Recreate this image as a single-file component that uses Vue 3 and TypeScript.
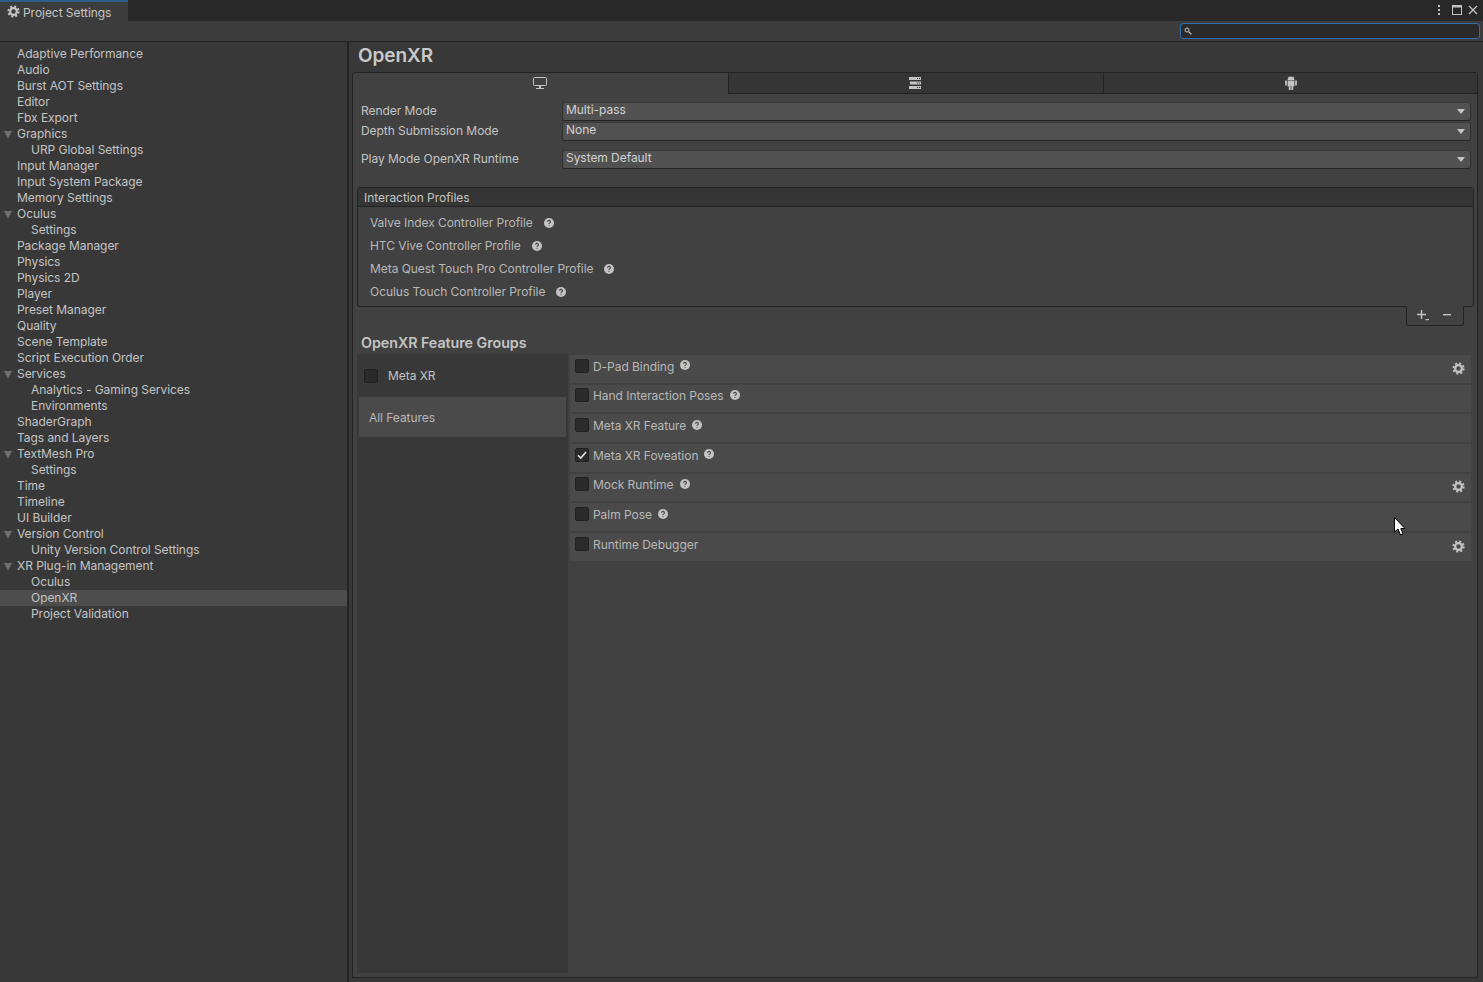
<script setup lang="ts">
interface NavItem { label: string; level: number; open?: boolean; selected?: boolean }
const nav: NavItem[] = [
  { label: 'Adaptive Performance', level: 0 },
  { label: 'Audio', level: 0 },
  { label: 'Burst AOT Settings', level: 0 },
  { label: 'Editor', level: 0 },
  { label: 'Fbx Export', level: 0 },
  { label: 'Graphics', level: 0, open: true },
  { label: 'URP Global Settings', level: 1 },
  { label: 'Input Manager', level: 0 },
  { label: 'Input System Package', level: 0 },
  { label: 'Memory Settings', level: 0 },
  { label: 'Oculus', level: 0, open: true },
  { label: 'Settings', level: 1 },
  { label: 'Package Manager', level: 0 },
  { label: 'Physics', level: 0 },
  { label: 'Physics 2D', level: 0 },
  { label: 'Player', level: 0 },
  { label: 'Preset Manager', level: 0 },
  { label: 'Quality', level: 0 },
  { label: 'Scene Template', level: 0 },
  { label: 'Script Execution Order', level: 0 },
  { label: 'Services', level: 0, open: true },
  { label: 'Analytics - Gaming Services', level: 1 },
  { label: 'Environments', level: 1 },
  { label: 'ShaderGraph', level: 0 },
  { label: 'Tags and Layers', level: 0 },
  { label: 'TextMesh Pro', level: 0, open: true },
  { label: 'Settings', level: 1 },
  { label: 'Time', level: 0 },
  { label: 'Timeline', level: 0 },
  { label: 'UI Builder', level: 0 },
  { label: 'Version Control', level: 0, open: true },
  { label: 'Unity Version Control Settings', level: 1 },
  { label: 'XR Plug-in Management', level: 0, open: true },
  { label: 'Oculus', level: 1 },
  { label: 'OpenXR', level: 1, selected: true },
  { label: 'Project Validation', level: 1 },
]
const dropdowns = [
  { label: 'Render Mode', value: 'Multi-pass', spaced: false },
  { label: 'Depth Submission Mode', value: 'None', spaced: false },
  { label: 'Play Mode OpenXR Runtime', value: 'System Default', spaced: true },
]
const profiles = [
  'Valve Index Controller Profile',
  'HTC Vive Controller Profile',
  'Meta Quest Touch Pro Controller Profile',
  'Oculus Touch Controller Profile',
]
const features = [
  { label: 'D-Pad Binding', gear: true, checked: false, help: true },
  { label: 'Hand Interaction Poses', gear: false, checked: false, help: true },
  { label: 'Meta XR Feature', gear: false, checked: false, help: true },
  { label: 'Meta XR Foveation', gear: false, checked: true, help: true },
  { label: 'Mock Runtime', gear: true, checked: false, help: true },
  { label: 'Palm Pose', gear: false, checked: false, help: true },
  { label: 'Runtime Debugger', gear: true, checked: false, help: false },
]
</script>

<template>
  <div class="window">
    <header class="tabbar">
      <div class="tab">
        <svg class="tab-gear" viewBox="0 0 14 14" width="13" height="13">
          <circle cx="7" cy="7" r="3.6" fill="none" stroke="#c4c4c4" stroke-width="2.4" />
          <circle cx="7" cy="7" r="5.5" fill="none" stroke="#c4c4c4" stroke-width="2.2" stroke-dasharray="2.2 2.12" />
        </svg>
        <span>Project Settings</span>
      </div>
      <div class="window-actions">
        <svg class="act-dots" viewBox="0 0 4 12" width="4" height="12"><rect x="1" y="1" width="2" height="2" fill="#c4c4c4" /><rect x="1" y="5" width="2" height="2" fill="#c4c4c4" /><rect x="1" y="9" width="2" height="2" fill="#c4c4c4" /></svg>
        <svg class="act-max" viewBox="0 0 10 10" width="10" height="10"><rect x="0.5" y="0.5" width="9" height="9" fill="none" stroke="#c4c4c4" /><rect x="0" y="0" width="10" height="2.5" fill="#c4c4c4" /></svg>
        <svg viewBox="0 0 10 10" width="10" height="10"><path d="M1 1 L9 9 M9 1 L1 9" stroke="#c4c4c4" stroke-width="1.3" /></svg>
      </div>
    </header>

    <div class="toolbar">
      <div class="search">
        <svg viewBox="0 0 8 8" width="8" height="8"><circle cx="3" cy="3" r="2" fill="none" stroke="#c4c4c4" stroke-width="1" /><path d="M4.6 4.6 L7.4 7.4" stroke="#c4c4c4" stroke-width="1.3" /></svg>
      </div>
    </div>

    <div class="body">
      <aside class="sidebar">
        <div
          v-for="(item, i) in nav"
          :key="i"
          class="nav-row"
          :class="{ selected: item.selected, child: item.level === 1 }"
        >
          <span v-if="item.open" class="caret"></span>
          {{ item.label }}
        </div>
      </aside>

      <main class="main">
        <h1 class="title">OpenXR</h1>
        <section class="panel">
          <div class="tabs">
            <div class="ptab active">
              <svg viewBox="0 0 14 12" width="14" height="12">
                <rect x="0.5" y="0.5" width="13" height="8" rx="1" fill="none" stroke="#c4c4c4" />
                <rect x="6" y="9" width="2" height="2" fill="#c4c4c4" />
                <rect x="3" y="11" width="8" height="1" fill="#c4c4c4" />
              </svg>
            </div>
            <div class="ptab server">
              <svg viewBox="0 0 12 12" width="12" height="12">
                <rect x="0" y="0" width="12" height="3" fill="#c4c4c4" />
                <rect x="1" y="4.5" width="11" height="3" fill="#c4c4c4" />
                <rect x="0" y="9" width="12" height="3" fill="#c4c4c4" />
                <rect x="8" y="1" width="1" height="1" fill="#383838" /><rect x="10" y="1" width="1" height="1" fill="#383838" />
                <rect x="8" y="5.5" width="1" height="1" fill="#383838" /><rect x="10" y="5.5" width="1" height="1" fill="#383838" />
                <rect x="8" y="10" width="1" height="1" fill="#383838" /><rect x="10" y="10" width="1" height="1" fill="#383838" />
              </svg>
            </div>
            <div class="ptab android">
              <svg viewBox="0 0 12 14" width="12" height="14">
                <path d="M2.6 4 A3.4 3.4 0 0 1 9.4 4 Z" fill="#c4c4c4" />
                <path d="M3 0.5 L4 2 M9 0.5 L8 2" stroke="#a8a8a8" stroke-width="0.8" />
                <rect x="2.6" y="4.5" width="6.8" height="6" fill="#c4c4c4" />
                <rect x="0" y="4.5" width="2" height="5" fill="#b0b0b0" />
                <rect x="10" y="4.5" width="2" height="5" fill="#b0b0b0" />
                <rect x="3.8" y="10.5" width="1.8" height="3.5" fill="#c4c4c4" />
                <rect x="6.4" y="10.5" width="1.8" height="3.5" fill="#c4c4c4" />
              </svg>
            </div>
          </div>

          <div class="fields">
            <div v-for="d in dropdowns" :key="d.label" class="field" :class="{ spaced: d.spaced }">
              <label class="field-label">{{ d.label }}</label>
              <div class="dropdown">
                <span>{{ d.value }}</span>
                <span class="drop-arrow"></span>
              </div>
            </div>
          </div>

          <div class="profiles">
            <div class="profiles-head">Interaction Profiles</div>
            <div class="profiles-list">
              <div v-for="p in profiles" :key="p" class="profile">
                <span>{{ p }}</span>
                <svg class="help" viewBox="0 0 10 10" width="10" height="10">
                  <circle cx="5" cy="5" r="5" fill="#c4c4c4" />
                  <path d="M3.6 3.9 A1.4 1.4 0 1 1 5.5 5.1 Q5 5.4 5 6" fill="none" stroke="#414141" stroke-width="1.1" />
                  <rect x="4.5" y="6.9" width="1" height="1" fill="#414141" />
                </svg>
              </div>
            </div>
          </div>
          <div class="footer-wrap">
            <div class="add-remove">
              <div class="plus">
                <svg viewBox="0 0 14 12" width="14" height="12">
                  <path d="M5.5 1 V10 M1 5.5 H10" stroke="#c4c4c4" stroke-width="1.4" />
                  <rect x="9.5" y="10" width="3.5" height="1.2" fill="#c4c4c4" />
                </svg>
              </div>
              <svg viewBox="0 0 8 2" width="8" height="2"><rect width="8" height="1.4" fill="#c4c4c4" /></svg>
            </div>
          </div>

          <h2 class="groups-title">OpenXR Feature Groups</h2>
          <div class="groups">
            <div class="groups-left">
              <div class="group-item">
                <span class="check"></span>
                <span class="group-name">Meta XR</span>
              </div>
              <div class="all-features">All Features</div>
            </div>
            <div class="features">
              <div v-for="f in features" :key="f.label" class="feature">
                <span class="check">
                  <svg v-if="f.checked" viewBox="0 0 10 10" width="10" height="10"><path d="M1 5.2 L3.8 8 L9 2" fill="none" stroke="#e4e4e4" stroke-width="1.6" /></svg>
                </span>
                <span class="feature-name">{{ f.label }}</span>
                <svg v-if="f.help" class="help feature-help" viewBox="0 0 10 10" width="10" height="10">
                  <circle cx="5" cy="5" r="5" fill="#c4c4c4" />
                  <path d="M3.6 3.9 A1.4 1.4 0 1 1 5.5 5.1 Q5 5.4 5 6" fill="none" stroke="#4a4a4a" stroke-width="1.1" />
                  <rect x="4.5" y="6.9" width="1" height="1" fill="#4a4a4a" />
                </svg>
                <svg v-if="f.gear" class="gear" viewBox="0 0 14 14" width="13" height="13">
                  <circle cx="7" cy="7" r="3.6" fill="none" stroke="#c4c4c4" stroke-width="2.4" />
                  <circle cx="7" cy="7" r="5.5" fill="none" stroke="#c4c4c4" stroke-width="2.2" stroke-dasharray="2.2 2.12" />
                </svg>
              </div>
            </div>
          </div>
        </section>
      </main>
    </div>

    <svg class="cursor" viewBox="0 0 12 19" width="12" height="19">
      <path d="M0.5 0.5 V15 L4 12 L6.5 18 L9 17 L6.8 11.5 L11 11.5 Z" fill="#fff" stroke="#000" stroke-width="1" />
    </svg>
  </div>
</template>

<style>
html, body { margin: 0; background: #383838; }
</style>

<style scoped>
.window {
  position: relative;
  width: 1483px;
  height: 982px;
  overflow: hidden;
  display: flex;
  flex-direction: column;
  background: #383838;
  color: #c4c4c4;
  font-family: Inter, "Liberation Sans", sans-serif;
  font-size: 12px;
  line-height: 16px;
  letter-spacing: -0.05px;
}
.tabbar {
  height: 21px;
  flex: none;
  display: flex;
  justify-content: space-between;
  background: #282828;
}
.tab {
  width: 121px;
  height: 19px;
  border-top: 2px solid #2b5d8e;
  background: #3c3c3c;
  display: flex;
  align-items: center;
  padding-left: 7px;
  gap: 3px;
  box-sizing: content-box;
}
.tab span { position: relative; top: 1px; }
.tab-gear { flex: none; }
.window-actions {
  display: flex;
  align-items: center;
  padding: 0 5px 2px 0;
  height: 19px;
}
.act-dots { margin-right: 11px; }
.act-max { margin-right: 6px; }
.toolbar {
  height: 20px;
  flex: none;
  background: #3c3c3c;
  border-bottom: 1px solid #232323;
  display: flex;
  justify-content: flex-end;
  align-items: center;
  box-sizing: content-box;
  padding-right: 3px;
}
.search {
  width: 295px;
  height: 14px;
  background: #2a2a2a;
  border: 1px solid #2f6fb0;
  border-radius: 3px;
  display: flex;
  align-items: center;
  padding-left: 3px;
  box-sizing: content-box;
}
.body {
  flex: 1;
  min-height: 0;
  display: flex;
}
.sidebar {
  width: 347px;
  flex: none;
  padding-top: 4px;
  border-right: 2px solid #232323;
  box-sizing: content-box;
}
.nav-row {
  position: relative;
  height: 16px;
  padding-left: 17px;
  white-space: nowrap;
}
.nav-row.child { padding-left: 31px; }
.nav-row.selected { background: #4d4d4d; }
.caret {
  position: absolute;
  left: 4px;
  top: 5px;
  width: 0;
  height: 0;
  border-left: 4.5px solid transparent;
  border-right: 4.5px solid transparent;
  border-top: 8px solid #6e6e6e;
}
.main {
  flex: 1;
  min-width: 0;
  padding: 0 5px 4px 3px;
  display: flex;
  flex-direction: column;
}
.title {
  margin: 0;
  height: 30px;
  padding-left: 6px;
  font-size: 19px;
  line-height: 27px;
  font-weight: 600;
  color: #c8c8c8;
}
.panel {
  flex: 1;
  min-height: 0;
  background: #414141;
  border: 1px solid #232323;
  border-radius: 3px 3px 0 0;
  display: flex;
  flex-direction: column;
}
.tabs {
  height: 21px;
  flex: none;
  display: flex;
}
.ptab {
  flex: 1;
  background: #353535;
  border-bottom: 1px solid #232323;
  border-left: 1px solid #232323;
  display: flex;
  align-items: center;
  justify-content: center;
}
.ptab.active {
  background: transparent;
  border: 0;
  padding-bottom: 1px;
  padding-right: 2px;
}
.ptab.server svg { margin-right: 2px; }
.ptab.android svg { margin-left: 2px; }
.fields {
  padding: 7px 6px 0 8px;
}
.field {
  display: flex;
  align-items: center;
  height: 20px;
}
.field.spaced { margin-top: 8px; }
.field-label {
  width: 201px;
  flex: none;
}
.dropdown {
  flex: 1;
  height: 15px;
  padding: 0 5px 2px 3px;
  background: #515151;
  border: 1px solid #303030;
  border-bottom-color: #242424;
  border-top-color: #3a3a3a;
  border-radius: 3px;
  display: flex;
  align-items: center;
  justify-content: space-between;
  color: #d2d2d2;
  line-height: 14px;
}
.drop-arrow {
  width: 0;
  height: 0;
  border-left: 4px solid transparent;
  border-right: 4px solid transparent;
  border-top: 5px solid #c4c4c4;
  margin-top: 2px;
}
.profiles {
  margin: 18px 3px 0 4px;
  height: 118px;
  flex: none;
  border: 1px solid #232323;
  border-radius: 3px;
  box-sizing: content-box;
}
.profiles-head {
  height: 18px;
  padding-left: 6px;
  background: #353535;
  border-bottom: 1px solid #232323;
  line-height: 20px;
  box-sizing: content-box;
}
.profiles-list {
  padding: 4px 12px 0;
  display: flex;
  flex-direction: column;
}
.profile {
  height: 23px;
  display: flex;
  align-items: center;
  gap: 11px;
  color: #b8b8b8;
}
.help { flex: none; }
.footer-wrap {
  display: flex;
  justify-content: flex-end;
  padding-right: 13px;
  flex: none;
  margin-top: -1px;
}
.add-remove {
  width: 46px;
  height: 16px;
  padding: 0 0 2px 10px;
  border: 1px solid #232323;
  border-top-color: #414141;
  border-radius: 0 0 3px 3px;
  background: #414141;
  display: flex;
  align-items: center;
  gap: 12px;
  box-sizing: content-box;
}
.plus { display: flex; width: 14px; margin-left: -1px; margin-right: 1px; }
.groups-title {
  margin: 7px 0 0 8px;
  height: 21px;
  font-size: 14.3px;
  line-height: 20px;
  font-weight: 600;
  color: #c4c4c4;
}
.groups {
  flex: 1;
  min-height: 0;
  display: flex;
  margin: 0 6px 4px 4px;
}
.groups-left {
  width: 211px;
  flex: none;
  background: #383838;
}
.group-item {
  height: 43px;
  display: flex;
  align-items: center;
  padding-left: 7px;
  box-sizing: border-box;
}
.group-name { margin-left: 10px; }
.all-features {
  margin: 0 2px;
  height: 40px;
  padding-top: 2px;
  box-sizing: border-box;
  background: #4a4a4a;
  display: flex;
  align-items: center;
  padding-left: 10px;
  color: #b8b8b8;
}
.check {
  width: 12px;
  height: 12px;
  flex: none;
  background: #2b2b2b;
  border: 1px solid #212121;
  border-radius: 2px;
  display: flex;
  align-items: center;
  justify-content: center;
}
.features {
  flex: 1;
  margin-left: 2px;
  padding-top: 1px;
  display: flex;
  flex-direction: column;
  gap: 2px;
}
.feature {
  height: 27.67px;
  flex: none;
  background: #4a4a4a;
  display: flex;
  align-items: center;
  padding-left: 5px;
  color: #b8b8b8;
}
.feature .check { margin-top: -6px; }
.feature-name { margin-left: 4px; margin-top: -4px; }
.feature-help { margin-left: 6px; margin-top: -7px; }
.gear { margin-left: auto; margin-right: 6px; margin-top: -1px; }
.cursor {
  position: absolute;
  left: 1394px;
  top: 517px;
}
</style>
